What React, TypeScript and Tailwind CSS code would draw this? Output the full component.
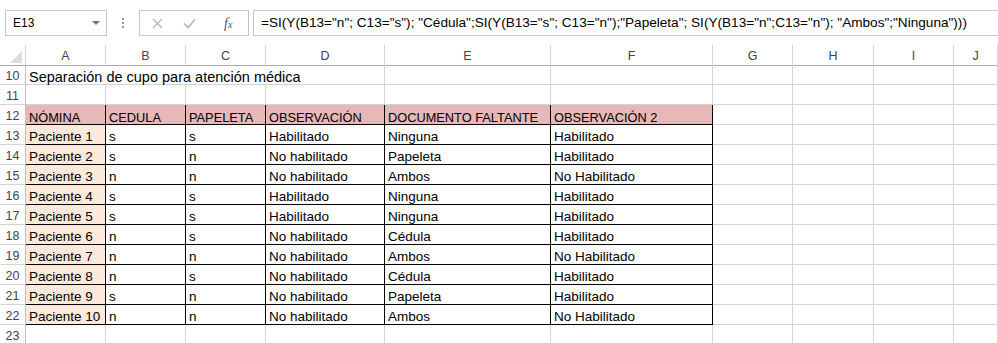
import React from "react";

const COLS = ["A", "B", "C", "D", "E", "F", "G", "H", "I", "J"];

const rows = [
	["Paciente 1", "s", "s", "Habilitado", "Ninguna", "Habilitado"],
	["Paciente 2", "s", "n", "No habilitado", "Papeleta", "Habilitado"],
	["Paciente 3", "n", "n", "No habilitado", "Ambos", "No Habilitado"],
	["Paciente 4", "s", "s", "Habilitado", "Ninguna", "Habilitado"],
	["Paciente 5", "s", "s", "Habilitado", "Ninguna", "Habilitado"],
	["Paciente 6", "n", "s", "No habilitado", "Cédula", "Habilitado"],
	["Paciente 7", "n", "n", "No habilitado", "Ambos", "No Habilitado"],
	["Paciente 8", "n", "s", "No habilitado", "Cédula", "Habilitado"],
	["Paciente 9", "s", "n", "No habilitado", "Papeleta", "Habilitado"],
	["Paciente 10", "n", "n", "No habilitado", "Ambos", "No Habilitado"],
];

const headers = ["NÓMINA", "CEDULA", "PAPELETA", "OBSERVACIÓN", "DOCUMENTO FALTANTE", "OBSERVACIÓN 2"];

const formula =
	'=SI(Y(B13="n"; C13="s"); "Cédula";SI(Y(B13="s"; C13="n");"Papeleta"; SI(Y(B13="n";C13="n"); "Ambos";"Ninguna")))';

function RowNum({ n }: { n: number }) {
	return (
		<div className="flex items-center justify-center border-r border-b border-r-[#bfbfbf] border-b-[#d4d4d4] pt-[3px] text-[12.5px] text-[#444]">
			{n}
		</div>
	);
}

function Grid({ children }: { children?: React.ReactNode }) {
	return (
		<div className="flex items-center overflow-hidden whitespace-nowrap border-r border-b border-[#d4d4d4] pl-[3px] pt-[6px]">
			{children}
		</div>
	);
}

function Boxed({ children, fill, small }: { children?: React.ReactNode; fill?: string; small?: boolean }) {
	return (
		<div
			className={`flex items-center overflow-hidden whitespace-nowrap border-r border-b border-black pl-[3px] pt-[6px] ${fill ?? ""} ${small ? "text-[12.8px]" : ""}`}
		>
			{children}
		</div>
	);
}

function EmptyRow({ n }: { n: number }) {
	return (
		<>
			<RowNum n={n} />
			{COLS.map((c) => (
				<Grid key={c} />
			))}
		</>
	);
}

export default function App() {
	return (
		<div
			className="h-[343px] w-[998px] overflow-hidden bg-white text-[13.5px] text-black"
			style={{ fontFamily: '"Liberation Sans", Arial, sans-serif' }}
		>
			{/* formula bar */}
			<div className="flex h-[45px] items-start pt-[10px]">
				<div className="ml-[5px] flex h-[26px] w-[102px] items-center justify-between border border-[#c6c6c6] pl-[7px] pr-[6px] text-[12px]">
					<span>E13</span>
					<svg width="8" height="4" viewBox="0 0 8 4">
						<path d="M0 0h8L4 4z" fill="#777" />
					</svg>
				</div>
				<div className="ml-[14px] flex h-[26px] w-[4px] flex-col items-center justify-center gap-[2px]">
					<span className="block h-[2px] w-[2px] bg-[#9a9a9a]" />
					<span className="block h-[2px] w-[2px] bg-[#9a9a9a]" />
					<span className="block h-[2px] w-[2px] bg-[#9a9a9a]" />
				</div>
				<div className="ml-[14px] flex h-[26px] w-[110px] items-center border border-[#c6c6c6]">
					<svg className="ml-[12px]" width="11" height="11" viewBox="0 0 11 11">
						<path d="M1 1l9 9M10 1l-9 9" stroke="#b5b5b5" strokeWidth="1.3" />
					</svg>
					<svg className="ml-[20px]" width="13" height="11" viewBox="0 0 13 11">
						<path d="M1 5.5l4 4L12 1.5" stroke="#b5b5b5" strokeWidth="1.6" fill="none" />
					</svg>
					<span
						className="ml-[28px] text-[14px] italic text-[#555]"
						style={{ fontFamily: '"Liberation Serif", serif' }}
					>
						f<span className="text-[10px]">x</span>
					</span>
				</div>
				<div className="ml-[4px] flex h-[26px] flex-1 items-center whitespace-nowrap border-y border-l border-[#c6c6c6] pl-[7px] text-[13.6px]">
					{formula}
				</div>
			</div>

			{/* sheet */}
			<div className="grid auto-rows-[20px] grid-cols-[26px_80px_80px_80px_119px_166px_162px_80px_81px_80px_1fr]">
				{/* column headers */}
				<div className="flex h-[21px] items-end justify-end border-b border-r border-b-[#ababab] border-r-[#d4d4d4] pb-[2px] pr-[3px]">
					<svg width="12" height="12" viewBox="0 0 12 12">
						<path d="M12 0v12H0z" fill="#dcdcdc" />
					</svg>
				</div>
				{COLS.map((c) => (
					<div
						key={c}
						className="flex h-[21px] items-center justify-center border-b border-r border-b-[#ababab] border-r-[#d4d4d4] pt-[2px] text-[12.5px] text-[#444]"
					>
						{c}
					</div>
				))}

				{/* row 10 */}
				<RowNum n={10} />
				<div className="col-span-4 flex items-center whitespace-nowrap border-r border-b border-[#d4d4d4] pl-[3px] pt-[6px] text-[14.5px]">
					Separación de cupo para atención médica
				</div>
				{COLS.slice(4).map((c) => (
					<Grid key={c} />
				))}

				<EmptyRow n={11} />

				{/* row 12 headers */}
				<RowNum n={12} />
				{headers.map((h) => (
					<Boxed key={h} fill="bg-[#e6b8b7]" small>
						{h}
					</Boxed>
				))}
				{COLS.slice(6).map((c) => (
					<Grid key={c} />
				))}

				{rows.map((r, i) => (
					<React.Fragment key={i}>
						<RowNum n={13 + i} />
						{r.map((v, j) => (
							<Boxed key={j} fill={j === 0 ? "bg-[#fde9d9]" : ""}>
								{v}
							</Boxed>
						))}
						{COLS.slice(6).map((c) => (
							<Grid key={c} />
						))}
					</React.Fragment>
				))}

				<EmptyRow n={23} />
			</div>
		</div>
	);
}
